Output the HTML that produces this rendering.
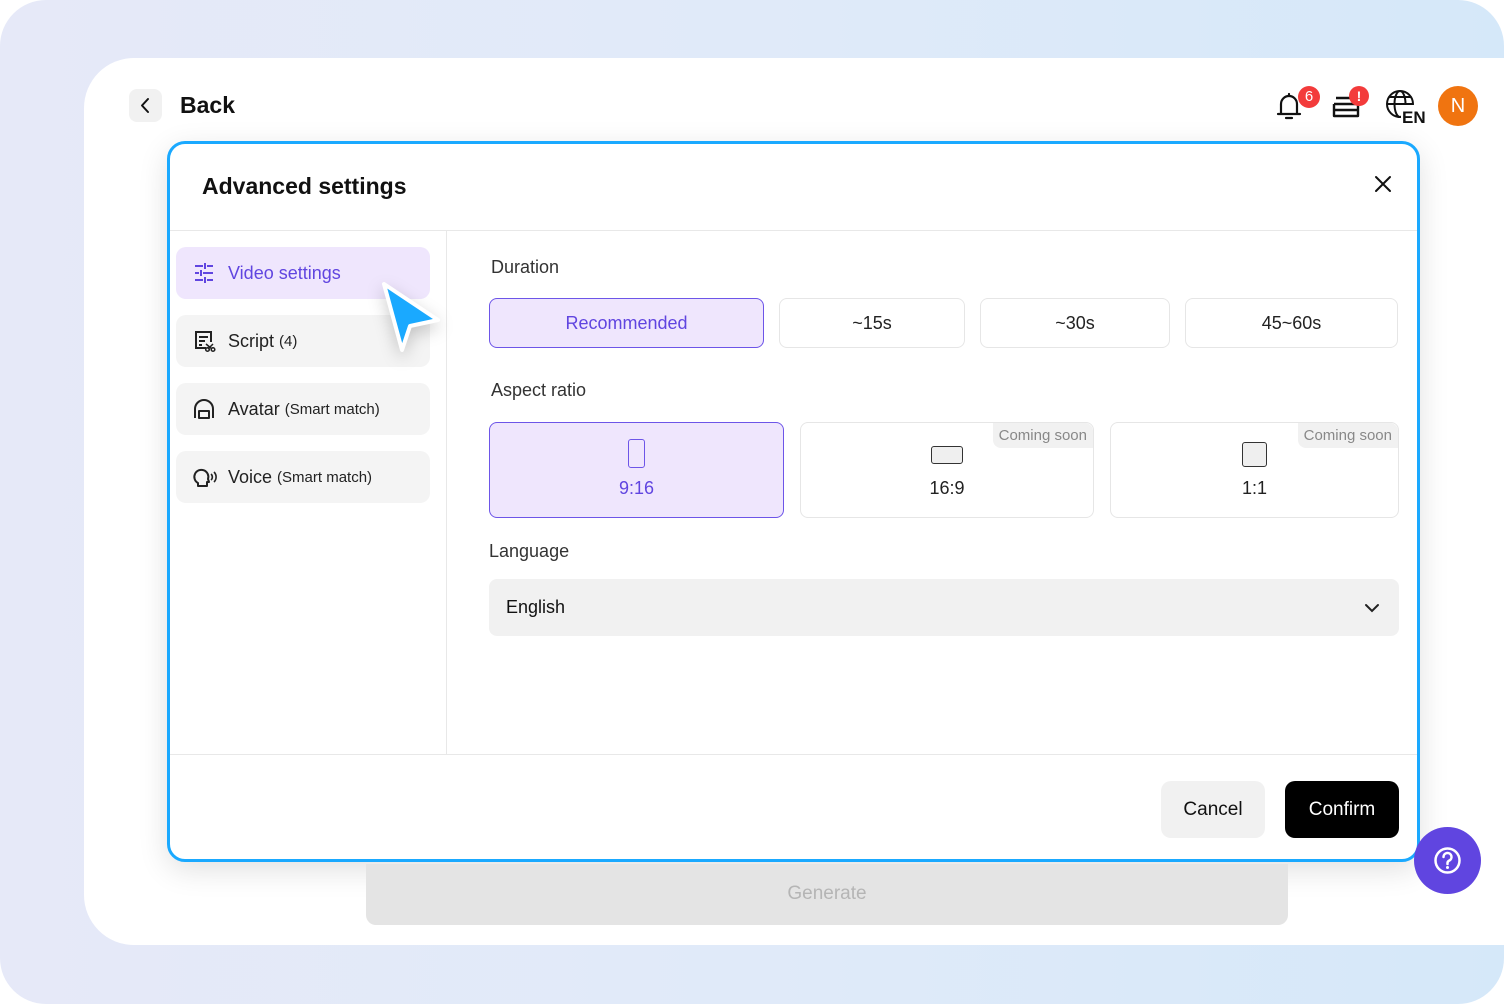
<!DOCTYPE html>
<html><head><meta charset="utf-8"><style>
*{box-sizing:border-box;margin:0;padding:0}
html,body{width:1504px;height:1004px;overflow:hidden;background:#fff}
body{font-family:"Liberation Sans",sans-serif;color:#111}
.bg{position:absolute;left:0;top:0;width:1504px;height:1004px;border-radius:46px;background:linear-gradient(90deg,#e6e9f8 0%,#e0eaf9 50%,#d5e8f9 100%)}
.card{position:absolute;left:84px;top:58px;width:1470px;height:887px;border-radius:50px;background:#fff}
.abs{position:absolute}
.back{left:129px;top:89px;width:33px;height:33px;border-radius:8px;background:#f1f1f1}
.dlg{left:167px;top:141px;width:1253px;height:721px;border:3px solid #1aa9ff;border-radius:18px;background:#fff;box-shadow:0 8px 30px rgba(0,0,0,.12)}
.nav{position:absolute;left:6px;width:254px;height:52px;border-radius:10px;background:#f4f4f4;font-size:18px;color:#222;display:flex;align-items:center;padding-left:52px}
.nav small{font-size:15px;margin-left:5px}
.nav svg{position:absolute;left:16px;top:14px}
.btn{position:absolute;height:50px;border:1.5px solid #e6e6e6;border-radius:8px;display:flex;align-items:center;justify-content:center;font-size:18px;color:#222}
.sel{background:#efe6fd;border-color:#6d55e8;color:#6045e0}
.lbl{position:absolute;font-size:18px;color:#333}
.ar{position:absolute;top:278px;height:96px;border:1.5px solid #e6e6e6;border-radius:8px;font-size:18px;color:#222}
.ar.sel{background:#efe6fd;border-color:#6d55e8;color:#6045e0}
.ar .t{position:absolute;left:0;right:0;top:55px;text-align:center}
.ar .shape{position:absolute;border:1.5px solid #333;border-radius:3px;background:#efefef}
.cs{position:absolute;right:0;top:0;background:#f1f1f1;color:#888;font-size:15px;padding:4px 6px 4px 6px;border-radius:0 8px 0 8px}
</style></head><body>
<div class="bg"></div>
<div class="card"></div>
<div class="abs back"><svg width="33" height="33"><path d="M19 10l-6 6.5 6 6.5" fill="none" stroke="#111" stroke-width="2" stroke-linecap="round" stroke-linejoin="round"/></svg></div>
<div class="abs" style="left:180px;top:92px;font-size:23px;font-weight:bold">Back</div>
<svg class="abs" style="left:1272px;top:88px" width="36" height="36"><path d="M6 26h22M9 26V16a8 8 0 0 1 16 0v10M14 30h6M17 6v2" fill="none" stroke="#111" stroke-width="2.2" stroke-linecap="round"/></svg>
<div class="abs" style="left:1298px;top:86px;width:22px;height:22px;border-radius:11px;background:#f33b3b;color:#fff;font-size:15px;text-align:center;line-height:22px">6</div>
<svg class="abs" style="left:1330px;top:92px" width="32" height="30"><path d="M4 12h24M6 6h20M4 12v12h24V12M4 18h24" fill="none" stroke="#111" stroke-width="2.4" stroke-linejoin="round"/></svg>
<div class="abs" style="left:1349px;top:86px;width:20px;height:20px;border-radius:10px;background:#f33b3b;color:#fff;font-size:14px;font-weight:bold;text-align:center;line-height:20px">!</div>
<svg class="abs" style="left:1385px;top:89px" width="44" height="36"><circle cx="15" cy="15" r="13" fill="none" stroke="#111" stroke-width="2"/><ellipse cx="15" cy="15" rx="5.5" ry="13" fill="none" stroke="#111" stroke-width="2"/><path d="M2 15h26M4 8h22" stroke="#111" stroke-width="2"/><rect x="16" y="16" width="28" height="20" fill="#fff"/><text x="17" y="34" font-family="Liberation Sans" font-weight="bold" font-size="17" fill="#111">EN</text></svg>
<div class="abs" style="left:1438px;top:86px;width:40px;height:40px;border-radius:20px;background:#f07410;color:#fff;font-size:20px;text-align:center;line-height:40px">N</div>

<div class="abs dlg">
 <div class="abs" style="left:32px;top:29px;font-size:23px;font-weight:bold">Advanced settings</div>
 <svg class="abs" style="left:1203px;top:30px" width="20" height="20"><path d="M3 3l14 14M17 3L3 17" stroke="#111" stroke-width="2" stroke-linecap="round"/></svg>
 <div class="abs" style="left:0;right:0;top:86px;height:1px;background:#e8e8e8"></div>
 <div class="abs" style="left:276px;top:87px;width:1px;height:523px;background:#e8e8e8"></div>
 <div class="abs" style="left:0;right:0;top:610px;height:1px;background:#e8e8e8"></div>

 <div class="nav" style="top:103px;background:#efe6fd;color:#6045e0"><svg width="24" height="24"><path d="M3 5h8M15 5h6M13 2v6M3 12h4M11 12h10M9 9v6M3 19h8M15 19h6M13 16v6" stroke="#6045e0" stroke-width="2" fill="none"/></svg>Video settings</div>
 <div class="nav" style="top:171px"><svg width="24" height="24"><path d="M14 19H4V3h15v10M7 8h9M7 12h6M7 16h3" stroke="#222" stroke-width="2" fill="none"/><circle cx="15.5" cy="20.5" r="1.8" fill="none" stroke="#222" stroke-width="1.5"/><circle cx="21" cy="20.5" r="1.8" fill="none" stroke="#222" stroke-width="1.5"/><path d="M14 15l6 5M21 15l-5 5" stroke="#222" stroke-width="1.5"/></svg>Script<small>(4)</small></div>
 <div class="nav" style="top:239px"><svg width="24" height="24"><path d="M3 21V12a9 9 0 0 1 18 0v9" stroke="#222" stroke-width="2" fill="none"/><path d="M7 21v-7h10v7z" stroke="#222" stroke-width="2" fill="none" stroke-linejoin="round"/></svg>Avatar<small>(Smart match)</small></div>
 <div class="nav" style="top:307px"><svg width="26" height="24"><path d="M6 21v-3a7 7 0 1 1 10-4l1 3h-2v4z" stroke="#222" stroke-width="2" fill="none" stroke-linejoin="round"/><path d="M19 9a4 4 0 0 1 0 6M22 7a7 7 0 0 1 0 10" stroke="#222" stroke-width="1.6" fill="none"/></svg>Voice<small>(Smart match)</small></div>

 <div class="lbl" style="left:321px;top:113px">Duration</div>
 <div class="btn sel" style="left:319px;top:154px;width:275px">Recommended</div>
 <div class="btn" style="left:609px;top:154px;width:186px">~15s</div>
 <div class="btn" style="left:810px;top:154px;width:190px">~30s</div>
 <div class="btn" style="left:1015px;top:154px;width:213px">45~60s</div>

 <div class="lbl" style="left:321px;top:236px">Aspect ratio</div>
 <div class="ar sel" style="left:319px;width:295px"><div class="shape" style="left:138px;top:16px;width:17px;height:29px;border-color:#6d55e8;background:#efe6fd"></div><div class="t">9:16</div></div>
 <div class="ar" style="left:630px;width:294px"><div class="shape" style="left:130px;top:23px;width:32px;height:18px"></div><div class="t">16:9</div><div class="cs">Coming soon</div></div>
 <div class="ar" style="left:940px;width:289px"><div class="shape" style="left:131px;top:19px;width:25px;height:25px"></div><div class="t">1:1</div><div class="cs">Coming soon</div></div>

 <div class="lbl" style="left:319px;top:397px">Language</div>
 <div class="abs" style="left:319px;top:435px;width:910px;height:57px;border-radius:8px;background:#f1f1f1;font-size:18px;padding:18px 0 0 17px">English
  <svg class="abs" style="right:18px;top:20px" width="18" height="18"><path d="M3 6l6 6 6-6" fill="none" stroke="#222" stroke-width="2" stroke-linecap="round"/></svg></div>

 <div class="abs" style="left:991px;top:637px;width:104px;height:57px;border-radius:10px;background:#f1f1f1;font-size:19px;text-align:center;line-height:57px">Cancel</div>
 <div class="abs" style="left:1115px;top:637px;width:114px;height:57px;border-radius:10px;background:#000;color:#fff;font-size:19px;text-align:center;line-height:57px">Confirm</div>
</div>

<svg class="abs" style="left:376px;top:278px;filter:drop-shadow(0 6px 8px rgba(0,0,0,.2))" width="70" height="78"><path d="M8 6L62 42 34 48 26 72z" fill="#1aa9ff" stroke="#fff" stroke-width="4" stroke-linejoin="round"/></svg>

<div class="abs" style="left:366px;top:864px;width:922px;height:61px;border-radius:0 0 10px 10px;background:#e4e4e4;color:#b5b5b5;font-size:19px;text-align:center;line-height:60px">Generate</div>
<div class="abs" style="left:1414px;top:827px;width:67px;height:67px;border-radius:34px;background:#6045e0"><svg width="67" height="67"><circle cx="33.5" cy="33.5" r="12" fill="none" stroke="#fff" stroke-width="2.5"/><path d="M29.5 30a4 4 0 1 1 5.5 3.7c-1 .5-1.5 1.2-1.5 2.3v1" fill="none" stroke="#fff" stroke-width="2.5" stroke-linecap="round"/><circle cx="33.5" cy="40.5" r="1.5" fill="#fff"/></svg></div>
</body></html>
